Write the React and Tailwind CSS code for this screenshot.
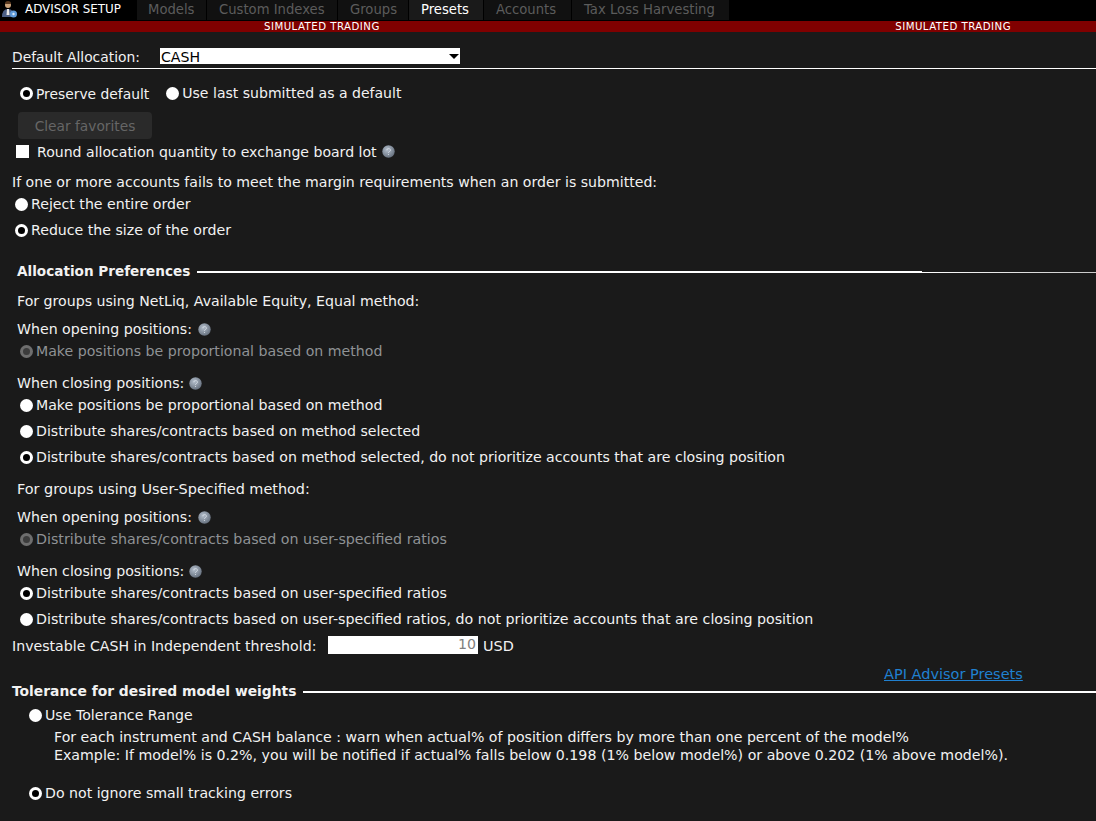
const tabs = [
  { name: "Models", cls: "w-[70px] pl-[11px]" },
  { name: "Custom Indexes", cls: "w-[131px] pl-[12px]" },
  { name: "Groups", cls: "w-[71px] pl-[12px]" },
  { name: "Presets", cls: "w-[75px] pl-[12px]" },
  { name: "Accounts", cls: "w-[88px] pl-[12px]" },
  { name: "Tax Loss Harvesting", cls: "w-[158px] pl-[12px]" },
];

function Radio({ state }) {
  if (state === "on") {
    return <span className="mr-[3px] flex h-[13px] w-[13px] shrink-0 items-center justify-center rounded-full bg-white"><span className="h-[7px] w-[7px] rounded-full bg-black" /></span>;
  }
  if (state === "disabled") {
    return <span className="mr-[3px] flex h-[13px] w-[13px] shrink-0 items-center justify-center rounded-full bg-[#6e6e6e]"><span className="h-[7px] w-[7px] rounded-full bg-[#3c3c3c]" /></span>;
  }
  return <span className="mr-[3px] h-[13px] w-[13px] shrink-0 rounded-full bg-white" />;
}

function Help() {
  return (
    <svg width="13" height="13" viewBox="0 0 13 13" className="ml-[5px] shrink-0">
      <defs>
        <radialGradient id="helpBall" cx="40%" cy="35%" r="70%">
          <stop offset="0" stopColor="#b4bfcc" />
          <stop offset="1" stopColor="#636d7b" />
        </radialGradient>
      </defs>
      <circle cx="6.5" cy="6.5" r="6.2" fill="url(#helpBall)" />
      <path d="M4.8 5.2 a1.8 1.6 0 1 1 2.6 1.4 c-.6 .3 -.9 .6 -.9 1.2" fill="none" stroke="#d4dbe4" strokeWidth="1" />
      <circle cx="6.5" cy="9.5" r=".6" fill="#d4dbe4" />
    </svg>
  );
}

function Option({ state, className, children }) {
  return (
    <div className={"flex h-[22px] items-center " + className}>
      <Radio state={state} />
      <span className={"relative top-[1px] " + (state === "disabled" ? "text-[#8f9295]" : "")}>{children}</span>
    </div>
  );
}

function Row({ className, children }) {
  return <div className={"flex h-[22px] items-center " + className}><span className="relative top-[1px]">{children}</span></div>;
}

export default function App() {
  return (
    <div className="h-[821px] w-[1096px] overflow-hidden bg-[#1a1a1a] font-['DejaVu_Sans',sans-serif] text-[14.15px] text-[#f2f2f2]">
      {/* top tabs */}
      <div className="flex h-[21px] items-stretch bg-black pb-[1px] text-[13.2px]">
        <div className="flex w-[137px] items-center bg-black pl-[2px]">
          <svg width="16" height="18" viewBox="0 0 16 18" className="shrink-0">
            <circle cx="6" cy="4" r="3" fill="#c9a27a" />
            <path d="M3 3 a3 3 0 0 1 6 0z" fill="#5a3a20" />
            <path d="M0 16 q0 -8 6 -8 q6 0 6 8z" fill="#4c5f86" />
            <path d="M5 8h2l.5 6h-3z" fill="#e8e8e8" />
            <circle cx="11.5" cy="13" r="3.5" fill="#5f9ad8" />
            <circle cx="11.5" cy="13" r="1.2" fill="#dbe9f7" />
          </svg>
          <span className="ml-[7px] text-[11.9px] text-white">ADVISOR SETUP</span>
        </div>
        {tabs.map((t) =>
          t.name === "Presets" ? (
            <div key={t.name} className={"flex items-center border-r border-black bg-[#1a1a1a] text-white " + t.cls}>{t.name}</div>
          ) : (
            <div key={t.name} className={"flex items-center border-r border-black bg-[#111111] text-[#5c5c5c] " + t.cls}>{t.name}</div>
          )
        )}
      </div>
      <div className="flex h-[11px] items-center justify-between bg-[#800000] pl-[264px] pr-[85px] text-[10.2px] tracking-[0.47px] text-white">
        <span>SIMULATED TRADING</span>
        <span>SIMULATED TRADING</span>
      </div>

      {/* default allocation */}
      <div className="ml-[12px] mt-[16px] flex h-[21px] items-start border-b border-white">
        <span className="relative -top-[1px] w-[148px] text-[13.85px]">Default Allocation:</span>
        <div className="flex h-[16px] w-[300px] items-center justify-between bg-white pl-[1px] text-black">
          <span className="relative top-[2px]">CASH</span>
          <span className="mr-[1px] h-0 w-0 border-x-[5px] border-t-[5px] border-x-transparent border-t-black" />
        </div>
      </div>

      <div className="ml-[20px] mt-[13px] flex h-[22px] items-center">
        <Radio state="on" />
        <span className="relative top-[1px] text-[13.85px]">Preserve default</span>
        <span className="w-[17px]" />
        <Radio />
        <span className="relative top-[1px] text-[14.05px]">Use last submitted as a default</span>
      </div>
      <button className="ml-[18px] mt-[8px] block h-[27px] w-[134px] rounded-[4px] bg-[#2a2a2a] pt-[2px] text-[13.75px] text-[#666666]">Clear favorites</button>
      <div className="ml-[16px] mt-[1px] flex h-[22px] items-center text-[14.08px]">
        <span className="mr-[8px] h-[13px] w-[13px] bg-white" />
        <span className="relative top-[2px]">Round allocation quantity to exchange board lot</span>
        <Help />
      </div>

      <Row className="ml-[12px] mt-[9px] text-[14.12px]">If one or more accounts fails to meet the margin requirements when an order is submitted:</Row>
      <Option className="ml-[15px]">Reject the entire order</Option>
      <Option state="on" className="ml-[15px] mt-[4px]">Reduce the size of the order</Option>

      {/* allocation preferences */}
      <div className="ml-[17px] mt-[19px] flex h-[22px] items-center text-[13.6px] font-bold">
        <span>Allocation Preferences</span>
        <span className="ml-[7px] mt-[1px] h-[2px] w-[725px] bg-white" />
        <span className="mt-[2px] h-[1px] flex-1 bg-gradient-to-r from-white to-[#c8c8c8]" />
      </div>
      <Row className="ml-[17px] mt-[8px]">For groups using NetLiq, Available Equity, Equal method:</Row>
      <div className="ml-[17px] mt-[6px] flex h-[22px] items-center"><span className="relative top-[1px]">When opening positions:</span><span className="ml-[1px]" /><Help /></div>
      <Option state="disabled" className="ml-[20px]">Make positions be proportional based on method</Option>
      <div className="ml-[17px] mt-[10px] flex h-[22px] items-center"><span className="relative top-[1px]">When closing positions:</span><Help /></div>
      <Option className="ml-[20px]">Make positions be proportional based on method</Option>
      <Option className="ml-[20px] mt-[4px]">Distribute shares/contracts based on method selected</Option>
      <Option state="on" className="ml-[20px] mt-[4px]">Distribute shares/contracts based on method selected, do not prioritize accounts that are closing position</Option>

      <Row className="ml-[17px] mt-[10px] text-[14.42px]">For groups using User-Specified method:</Row>
      <div className="ml-[17px] mt-[6px] flex h-[22px] items-center"><span className="relative top-[1px]">When opening positions:</span><span className="ml-[1px]" /><Help /></div>
      <Option state="disabled" className="ml-[20px] text-[14.24px]">Distribute shares/contracts based on user-specified ratios</Option>
      <div className="ml-[17px] mt-[10px] flex h-[22px] items-center"><span className="relative top-[1px]">When closing positions:</span><Help /></div>
      <Option state="on" className="ml-[20px] text-[14.24px]">Distribute shares/contracts based on user-specified ratios</Option>
      <Option className="ml-[20px] mt-[4px] text-[14.22px]">Distribute shares/contracts based on user-specified ratios, do not prioritize accounts that are closing position</Option>

      <div className="ml-[12px] mt-[5px] flex h-[22px] items-center">
        <span className="relative top-[1px] w-[316px]">Investable CASH in Independent threshold:</span>
        <span className="mb-[2px] flex h-[18px] w-[150px] items-center justify-end bg-white pr-[2px] text-[#808080]">10</span>
        <span className="relative top-[1px] ml-[5px] text-[14.4px]">USD</span>
      </div>

      <div className="mt-[9px] flex h-[16px] items-center pl-[884px]">
        <span className="relative top-[1px] text-[14.5px] text-[#2080d0] underline">API Advisor Presets</span>
      </div>

      {/* tolerance */}
      <div className="ml-[12px] flex h-[18px] items-center text-[13.85px] font-bold">
        <span>Tolerance for desired model weights</span>
        <span className="ml-[7px] mt-[1px] h-[2px] flex-1 bg-white" />
      </div>
      <Option className="ml-[29px] mt-[4px]">Use Tolerance Range</Option>
      <div className="ml-[54px] mt-[2px] leading-[18px]">
        <div>For each instrument and CASH balance : warn when actual% of position differs by more than one percent of the model%</div>
        <div className="text-[14.2px]">Example: If model% is 0.2%, you will be notified if actual% falls below 0.198 (1% below model%) or above 0.202 (1% above model%).</div>
      </div>
      <Option state="on" className="ml-[29px] mt-[18px]">Do not ignore small tracking errors</Option>
    </div>
  );
}
